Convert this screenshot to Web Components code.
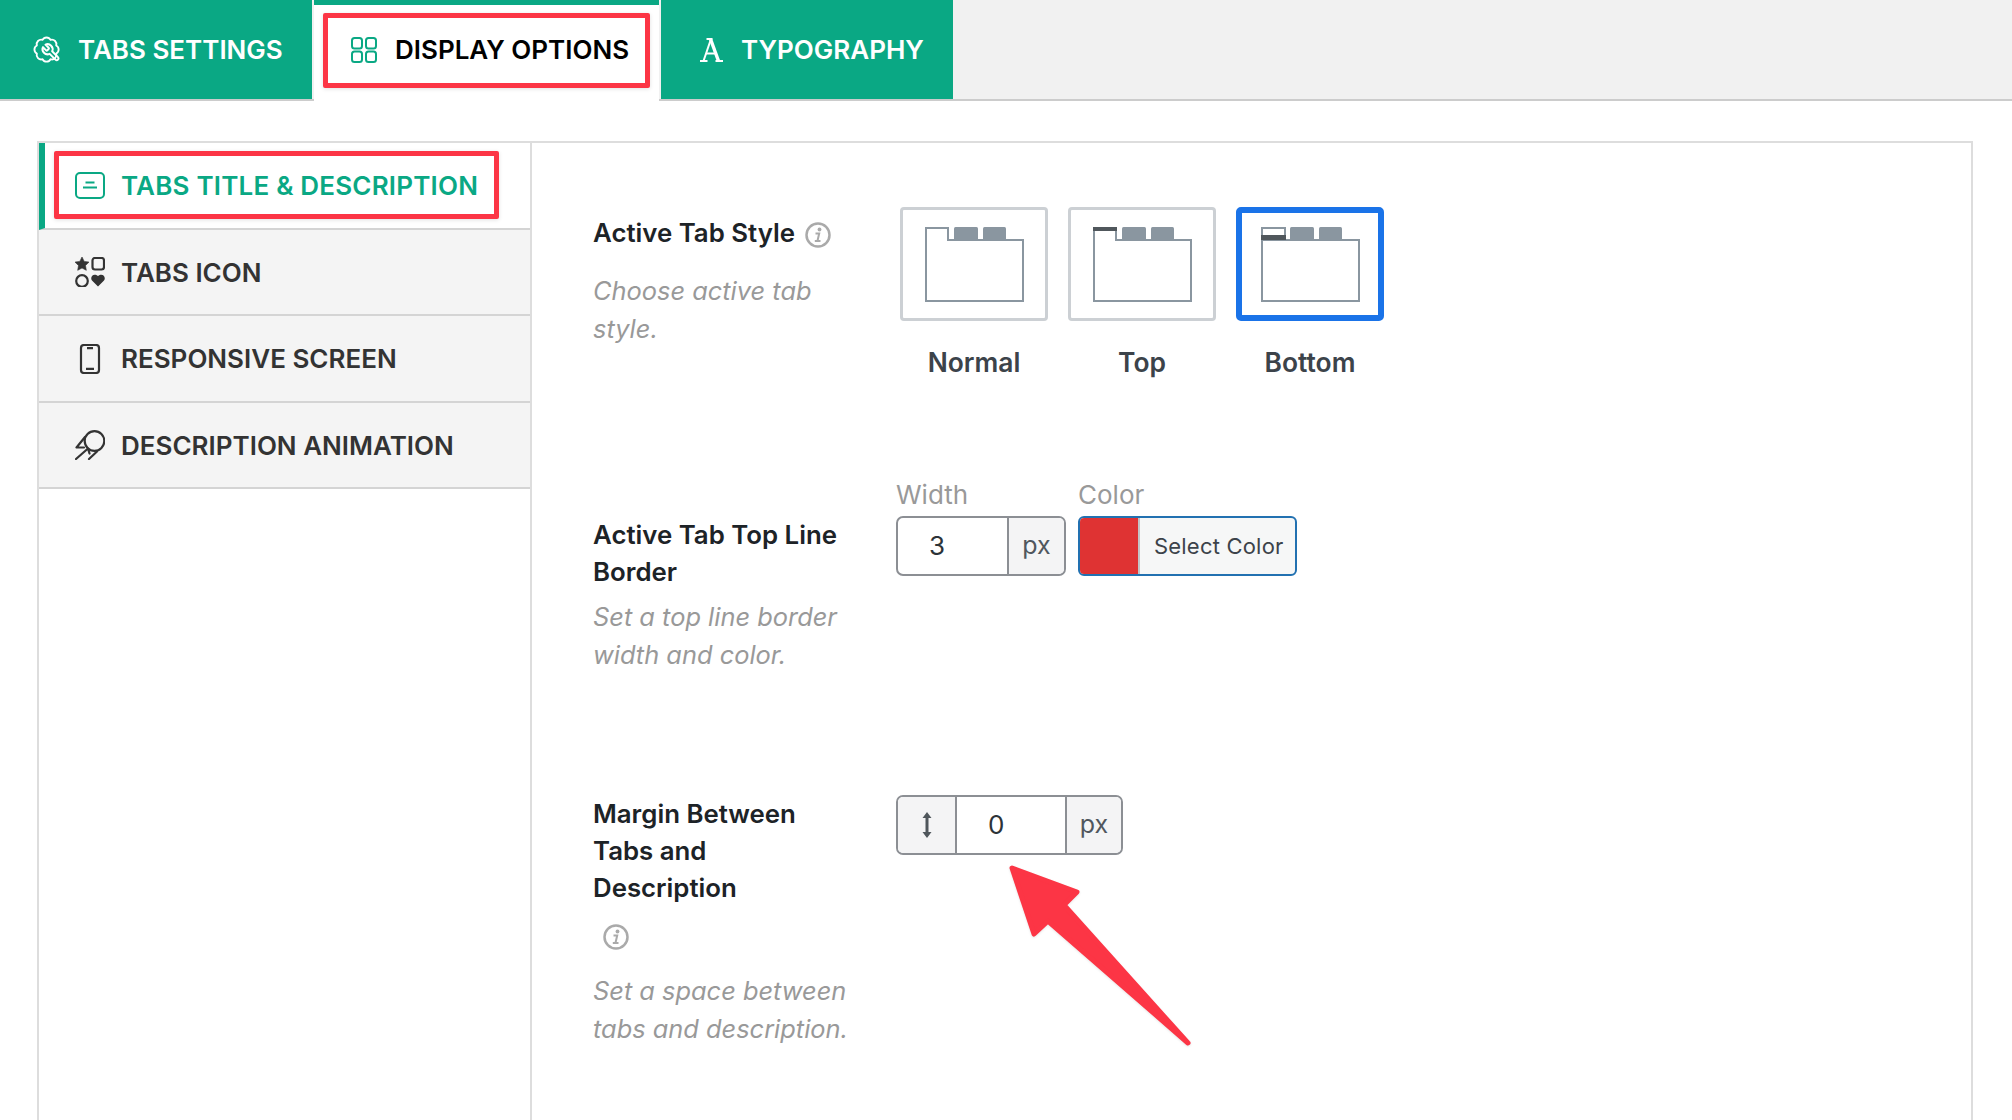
<!DOCTYPE html>
<html>
<head>
<meta charset="utf-8">
<title>Display options</title>
<style>
  html, body { margin: 0; padding: 0; background: #fff; }
  body { font-family: Inter, "Liberation Sans", sans-serif; width: 2012px; height: 1120px; overflow: hidden; position: relative; }
</style>
</head>
<body>

<tab-bar>
  <tab-item style="--w:312px; --gap:17px; --pad:33px">
    <svg slot="icon" width="28" height="28" viewBox="0 0 24 24" fill="none" stroke="#fff" stroke-width="1.600" stroke-linejoin="round" stroke-linecap="round"><path d="M20.3 8.56A3.9 3.9 0 0 1 20.3 15.44A3.9 3.9 0 0 1 15.44 20.3A3.9 3.9 0 0 1 8.56 20.3A3.9 3.9 0 0 1 3.7 15.44A3.9 3.9 0 0 1 3.7 8.56A3.9 3.9 0 0 1 8.56 3.7A3.9 3.9 0 0 1 15.44 3.7A3.9 3.9 0 0 1 20.3 8.56Z" transform="translate(-.4 -.4)"/><path stroke-width="2.400" transform="matrix(-.72 0 0 .72 24 5.600)" d="M14.7 6.3a1 1 0 0 0 0 1.4l1.6 1.6a1 1 0 0 0 1.4 0l3.77-3.77a6 6 0 0 1-7.94 7.94l-6.91 6.91a2.12 2.12 0 0 1-3-3l6.91-6.91a6 6 0 0 1 7.94-7.94l-3.76 3.76z"/></svg>
    TABS SETTINGS
  </tab-item>
  <tab-item active style="--w:345px; --gap:18px; --pad:37px">
    <svg slot="icon" width="26" height="26" viewBox="0 0 26 26" fill="none" stroke="#0aa884" stroke-width="2"><rect x="1" y="1" width="10" height="10.500" rx="2.500"/><rect x="15" y="1" width="10" height="10.500" rx="2.500"/><rect x="1" y="14.500" width="10" height="10.500" rx="2.500"/><rect x="15" y="14.500" width="10" height="10.500" rx="2.500"/></svg>
    DISPLAY OPTIONS
    <mark-box style="--x:9px; --y:8px; --mw:327px; --mh:75px"></mark-box>
  </tab-item>
  <tab-item style="--w:292px; --gap:18px; --pad:39px">
    <svg slot="icon" width="23" height="24" viewBox="0 0 23 24" fill="none" stroke="#fff" stroke-linecap="butt"><path d="M0 23H7.500M15.500 23H23M6.500 1H12.500" stroke-width="2"/><path d="M11 1L3.500 23" stroke-width="2"/><path d="M10.500 1L18.500 23" stroke-width="3.400"/><path d="M6 15.500H15.500" stroke-width="2"/></svg>
    TYPOGRAPHY
  </tab-item>
</tab-bar>

<settings-panel>
  <side-menu slot="menu">
    <side-item active>
      <svg slot="icon" width="30" height="27" viewBox="0 0 30 27" fill="none" stroke="#0aa884" stroke-width="2"><rect x="1" y="1" width="28" height="25" rx="4"/><path d="M10.500 10.500H19.500M8 15.500H22"/></svg>
      TABS TITLE &amp; DESCRIPTION
      <mark-box style="--x:9px; --y:8px; --mw:445px; --mh:68px"></mark-box>
    </side-item>
    <side-item style="--ih:86px">
      <svg slot="icon" width="30" height="30" viewBox="0 0 30 30" fill="none" stroke="#333" stroke-width="2.200"><path d="M7 0L9.200 4.400L14 5.100L10.500 8.500L11.300 13.300L7 11L2.700 13.300L3.500 8.500L0 5.100L4.800 4.400Z" fill="#333" stroke="#333" stroke-width=".6"/><rect x="17.500" y="1" width="11.500" height="11.500" rx="2.500"/><circle cx="7" cy="24" r="5.800"/><path d="M23 29.500L17 23.500C14.500 20 18.500 15.500 23 19C27.500 15.500 31.500 20 29 23.500Z" fill="#333" stroke="none"/></svg>
      TABS ICON
    </side-item>
    <side-item style="--ih:87px">
      <svg slot="icon" width="30" height="30" viewBox="0 0 30 30" fill="none" stroke="#333" stroke-width="2.200"><rect x="6" y="1" width="18" height="28" rx="3"/><path d="M12 4.200H18M11 24.800H19"/></svg>
      RESPONSIVE SCREEN
    </side-item>
    <side-item style="--ih:86px">
      <svg slot="icon" width="30" height="30" viewBox="0 0 30 30" fill="none" stroke="#333" stroke-width="2.200" stroke-linecap="round" stroke-linejoin="round"><circle cx="19.500" cy="11" r="9.800"/><path d="M10 7L1.500 17.500L9 17.500M1 29L13 18.500L14.500 23.500M14 29L22 21.500"/></svg>
      DESCRIPTION ANIMATION
    </side-item>
  </side-menu>

  <setting-row style="--h:273px; --top:-1px; --desc-gap:21px">
    <span slot="label">Active Tab Style<info-icon></info-icon></span>
    <span slot="desc">Choose active tab style.</span>
    <style-choices>
      <style-choice kind="normal">Normal</style-choice>
      <style-choice kind="top">Top</style-choice>
      <style-choice kind="bottom" selected>Bottom</style-choice>
    </style-choices>
  </setting-row>

  <setting-row style="--h:315px; --top:28px">
    <span slot="label">Active Tab Top Line Border</span>
    <span slot="desc">Set a top line border width and color.</span>
    <field-group>
      <labeled-field>
        <span slot="caption">Width</span>
        <number-field value="3" unit="px" style="--iw:109px"></number-field>
      </labeled-field>
      <labeled-field>
        <span slot="caption">Color</span>
        <color-field color="#df3333">Select Color</color-field>
      </labeled-field>
    </field-group>
  </setting-row>

  <setting-row style="--top:-8px; --desc-gap:22px">
    <span slot="label">Margin Between Tabs and Description<info-icon block></info-icon></span>
    <span slot="desc">Set a space between tabs and description.</span>
    <number-field value="0" unit="px" arrows style="--iw:108px; --aw:56px"></number-field>
  </setting-row>
</settings-panel>

<red-arrow></red-arrow>

<script>
class TabBar extends HTMLElement {
  constructor() {
    super();
    this.attachShadow({ mode: 'open' });
    this.shadowRoot.innerHTML = `
      <style>
        :host { display: flex; gap: 2px; height: 101px; box-sizing: border-box; background: #f1f1f1; border-bottom: 2px solid #ccc; }
      </style>
      <slot></slot>
    `;
  }
}
customElements.define('tab-bar', TabBar);

class TabItem extends HTMLElement {
  constructor() {
    super();
    this.attachShadow({ mode: 'open' });
    this.shadowRoot.innerHTML = `
      <style>
        :host { display: flex; align-items: center; gap: var(--gap); box-sizing: border-box; width: var(--w); height: 99px; padding-left: var(--pad); background: #0aa884; color: #fff; font-size: 26px; font-weight: 600; position: relative; }
        :host([active]) { height: 101px; background: #fff; color: #000; border-top: 5px solid #0aa884; padding-bottom: 7px; }
        ::slotted(svg) { flex: none; }
      </style>
      <slot name="icon"></slot>
      <span><slot></slot></span>
    `;
  }
}
customElements.define('tab-item', TabItem);

class MarkBox extends HTMLElement {
  constructor() {
    super();
    this.attachShadow({ mode: 'open' });
    this.shadowRoot.innerHTML = `
      <style>
        :host { position: absolute; left: var(--x); top: var(--y); width: var(--mw); height: var(--mh); box-sizing: border-box; border: 5px solid #fc3545; border-radius: 2px; box-shadow: 0 1px 4px rgba(0,0,0,.12); pointer-events: none; }
      </style>
    `;
  }
}
customElements.define('mark-box', MarkBox);

class SettingsPanel extends HTMLElement {
  constructor() {
    super();
    this.attachShadow({ mode: 'open' });
    this.shadowRoot.innerHTML = `
      <style>
        :host { display: flex; box-sizing: border-box; width: 1936px; height: 979px; margin: 40px 0 0 37px; border: 2px solid #ddd; border-bottom: 0; }
        .main { flex: 1; padding: 64px 0 0 61px; }
      </style>
      <slot name="menu"></slot>
      <div class="main"><slot></slot></div>
    `;
  }
}
customElements.define('settings-panel', SettingsPanel);

class SideMenu extends HTMLElement {
  constructor() {
    super();
    this.attachShadow({ mode: 'open' });
    this.shadowRoot.innerHTML = `
      <style>
        :host { display: block; flex: none; width: 493px; box-sizing: border-box; border-right: 2px solid #ddd; }
      </style>
      <slot></slot>
    `;
  }
}
customElements.define('side-menu', SideMenu);

class SideItem extends HTMLElement {
  constructor() {
    super();
    this.attachShadow({ mode: 'open' });
    this.shadowRoot.innerHTML = `
      <style>
        :host { display: flex; align-items: center; gap: 16px; box-sizing: border-box; height: var(--ih, 87px); padding-left: 36px; background: #f4f4f4; color: #333; border-bottom: 2px solid #d4d4d4; font-size: 26px; font-weight: 600; position: relative; }
        :host([active]) { background: #fff; color: #0aa884; border-left: 6px solid #0aa884; padding-left: 30px; letter-spacing: .2px; }
        ::slotted(svg) { flex: none; }
      </style>
      <slot name="icon"></slot>
      <span><slot></slot></span>
    `;
  }
}
customElements.define('side-item', SideItem);

class SettingRow extends HTMLElement {
  constructor() {
    super();
    this.attachShadow({ mode: 'open' });
    this.shadowRoot.innerHTML = `
      <style>
        :host { display: grid; grid-template-columns: 262px 1fr; column-gap: 41px; min-height: var(--h, 0); align-content: start; }
        .info { padding-top: calc(8px + var(--top, 0px)); }
        .label { font-size: 25.800px; font-weight: 600; line-height: 37px; color: #1d2327; }
        .desc { margin-top: var(--desc-gap, 8px); font-size: 25.400px; font-style: italic; line-height: 38px; color: #999; }
      </style>
      <div class="info">
        <div class="label"><slot name="label"></slot></div>
        <div class="desc"><slot name="desc"></slot></div>
      </div>
      <div><slot></slot></div>
    `;
  }
}
customElements.define('setting-row', SettingRow);

class InfoIcon extends HTMLElement {
  constructor() {
    super();
    this.attachShadow({ mode: 'open' });
    this.shadowRoot.innerHTML = `
      <style>
        :host { display: inline-block; width: 26px; height: 26px; margin-left: 10px; vertical-align: -6px; }
        :host([block]) { display: block; margin: 18px 0 0 10px; }
        svg { display: block; }
      </style>
      <svg width="26" height="26" viewBox="0 0 26 26" fill="none">
        <circle cx="13" cy="13" r="11.500" stroke="#aaa" stroke-width="2.500"/>
        <circle cx="14.500" cy="7.500" r="1.900" fill="#aaa"/>
        <path d="M10.500 11.500H14.200L12.500 18.800M9.800 19H15.500" stroke="#aaa" stroke-width="2" fill="none"/>
      </svg>
    `;
  }
}
customElements.define('info-icon', InfoIcon);

class StyleChoices extends HTMLElement {
  constructor() {
    super();
    this.attachShadow({ mode: 'open' });
    this.shadowRoot.innerHTML = `
      <style>:host { display: flex; gap: 20px; margin-left: 4px; }</style>
      <slot></slot>
    `;
  }
}
customElements.define('style-choices', StyleChoices);

class StyleChoice extends HTMLElement {
  constructor() {
    super();
    this.attachShadow({ mode: 'open' });
    const kind = this.getAttribute('kind');
    let firstTab = '<path d="M26 21H48V33H123V94H26Z" fill="#fff" stroke="#8a96a0" stroke-width="2"/>';
    if (kind === 'top') firstTab += '<rect x="25" y="20" width="24" height="4" fill="#50575c"/>';
    if (kind === 'bottom') {
      firstTab = '<path d="M26 21H49V33H123V94H26Z" fill="#fff" stroke="#8a96a0" stroke-width="2"/><path d="M26 33H49" stroke="#8a96a0" stroke-width="2"/><rect x="25" y="28" width="25" height="5" fill="#50575c"/>';
    }
    this.shadowRoot.innerHTML = `
      <style>
        :host { display: block; width: 148px; }
        .box { box-sizing: border-box; width: 148px; height: 114px; border: 3px solid #ccd0d4; border-radius: 4px; position: relative; }
        :host([selected]) .box { border: 6px solid #1a73e8; border-radius: 5px; }
        svg { position: absolute; left: -3px; top: -3px; }
        :host([selected]) svg { left: -6px; top: -6px; }
        .name { margin-top: 23px; text-align: center; font-size: 26.400px; font-weight: 600; line-height: 36px; color: #3c434a; }
      </style>
      <div class="box">
        <svg width="148" height="114" viewBox="0 0 148 114" fill="none">
          <rect x="54" y="20" width="24" height="13" rx="1.500" fill="#8a96a0"/>
          <rect x="83" y="20" width="23" height="13" rx="1.500" fill="#8a96a0"/>
          ${firstTab}
        </svg>
      </div>
      <div class="name"><slot></slot></div>
    `;
  }
}
customElements.define('style-choice', StyleChoice);

class FieldGroup extends HTMLElement {
  constructor() {
    super();
    this.attachShadow({ mode: 'open' });
    this.shadowRoot.innerHTML = `
      <style>:host { display: flex; gap: 12px; }</style>
      <slot></slot>
    `;
  }
}
customElements.define('field-group', FieldGroup);

class LabeledField extends HTMLElement {
  constructor() {
    super();
    this.attachShadow({ mode: 'open' });
    this.shadowRoot.innerHTML = `
      <style>
        :host { display: block; }
        .cap { height: 36px; font-size: 26px; line-height: 30px; color: #999; }
      </style>
      <div class="cap"><slot name="caption"></slot></div>
      <slot></slot>
    `;
  }
}
customElements.define('labeled-field', LabeledField);

class NumberField extends HTMLElement {
  constructor() {
    super();
    this.attachShadow({ mode: 'open' });
    const value = this.getAttribute('value') || '';
    const unit = this.getAttribute('unit') || '';
    const arrow = this.hasAttribute('arrows') ? `
      <span class="add arrows">
        <svg width="10" height="26" viewBox="0 0 10 26"><path d="M5 0L9.500 6H6.500V20H9.500L5 26L.5 20H3.500V6H.5Z" fill="#50575c"/></svg>
      </span>` : '';
    this.shadowRoot.innerHTML = `
      <style>
        :host { display: inline-flex; box-sizing: border-box; height: 60px; border: 2px solid #8c8f94; border-radius: 7px; overflow: hidden; background: #fff; color: #2c3338; font-size: 26px; }
        .val { box-sizing: border-box; width: var(--iw); padding-left: 31px; line-height: 56px; }
        .add { display: flex; align-items: center; justify-content: center; box-sizing: border-box; background: #f4f4f5; color: #50575e; font-size: 25px; width: var(--aw, 57px); border-left: 2px solid #8c8f94; padding-bottom: 2px; }
        .arrows { width: 59px; border-left: 0; border-right: 2px solid #8c8f94; padding: 0; }
      </style>
      ${arrow}
      <span class="val">${value}</span>
      <span class="add">${unit}</span>
    `;
  }
}
customElements.define('number-field', NumberField);

class ColorField extends HTMLElement {
  constructor() {
    super();
    this.attachShadow({ mode: 'open' });
    const color = this.getAttribute('color') || '#000';
    this.shadowRoot.innerHTML = `
      <style>
        :host { display: flex; box-sizing: border-box; width: 219px; height: 60px; border: 2px solid #2271b1; border-radius: 6px; overflow: hidden; background: #f6f7f7; color: #3c434a; font-size: 22px; }
        .swatch { box-sizing: border-box; width: 60px; background: ${color}; border-right: 2px solid #c3c4c7; flex: none; }
        .text { padding-left: 14px; line-height: 56px; white-space: nowrap; letter-spacing: .2px; }
      </style>
      <span class="swatch"></span>
      <span class="text"><slot></slot></span>
    `;
  }
}
customElements.define('color-field', ColorField);

class RedArrow extends HTMLElement {
  constructor() {
    super();
    this.attachShadow({ mode: 'open' });
    this.shadowRoot.innerHTML = `
      <style>
        :host { position: absolute; left: 1000px; top: 855px; width: 200px; height: 200px; }
        svg { display: block; filter: drop-shadow(0 1px 1px rgba(0,0,0,.1)); }
      </style>
      <svg width="200" height="200" viewBox="1000 855 200 200">
        <path d="M1012 868L1077 892L1064 905L1188 1043L1048 921L1034 934Z" fill="#fc3545" stroke="#fc3545" stroke-width="5" stroke-linejoin="round"/>
      </svg>
    `;
  }
}
customElements.define('red-arrow', RedArrow);
</script>
</body>
</html>
